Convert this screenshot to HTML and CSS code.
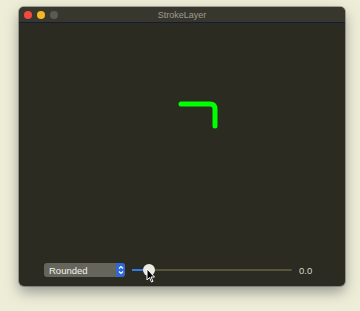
FILE: index.html
```html
<!DOCTYPE html>
<html>
<head>
<meta charset="utf-8">
<link rel="stylesheet" href="styles.css">
</head>
<body>
<div class="window">
  <div class="titlebar">
    <div class="lights">
      <span class="light red"></span>
      <span class="light yellow"></span>
      <span class="light gray"></span>
    </div>
    <div class="title">StrokeLayer</div>
  </div>
  <div class="content">
    <div class="canvas">
      <svg class="stroke" width="326" height="240" viewBox="0 0 326 240">
        <path d="M162 81 H191 Q196 81 196 86 V103" fill="none" stroke="#00ff00" stroke-width="5" stroke-linecap="round"/>
      </svg>
    </div>
    <div class="controls">
      <div class="popup">
        <span class="popup-label">Rounded</span>
        <span class="stepper">
          <svg width="8" height="12" viewBox="0 0 8 12"><path d="M2 4.5 L4 2.5 L6 4.5 M2 7.5 L4 9.5 L6 7.5" fill="none" stroke="#fff" stroke-width="1.2"/></svg>
        </span>
      </div>
      <div class="slider">
        <div class="track"><div class="fill" style="width:17px"></div></div>
        <div class="knob"></div>
        <svg class="cursor" width="10" height="15" viewBox="0 0 10 15"><path d="M1 1 V12 L3.5 9.5 L5.5 14 L7 13.3 L5 9 H8.5 Z" fill="#000" stroke="#fff" stroke-width="1"/></svg>
      </div>
      <div class="value">0.0</div>
    </div>
  </div>
</div>
</body>
</html>
```
FILE: styles.css
```css
html, body {
  margin: 0;
  padding: 0;
}
body {
  width: 360px;
  height: 311px;
  background: #eeeed8;
  font-family: "Liberation Sans", Arial, sans-serif;
  overflow: hidden;
}
.window {
  margin: 7px 0 0 19px;
  width: 326px;
  height: 279px;
  border-radius: 5px;
  overflow: hidden;
  background: #2c2b21;
  box-shadow: 0 6px 14px rgba(80, 80, 90, 0.55), 0 0 0 1px rgba(60, 60, 60, 0.4);
  display: flex;
  flex-direction: column;
}
.titlebar {
  height: 15px;
  background: #38372e;
  border-bottom: 1px solid #141a3a;
  display: flex;
  align-items: center;
  position: relative;
}
.lights {
  display: flex;
  gap: 5px;
  padding-left: 5px;
}
.light {
  width: 8px;
  height: 8px;
  border-radius: 50%;
}
.red { background: #f44a3e; }
.yellow { background: #f6b623; }
.gray { background: #5a5a55; }
.title {
  position: absolute;
  left: 0;
  right: 0;
  text-align: center;
  font-size: 9px;
  color: #9c9b94;
}
.content {
  flex: 1;
  display: flex;
  flex-direction: column;
}
.canvas {
  flex: 1;
  position: relative;
}
.stroke {
  position: absolute;
  left: 0;
  top: 0;
}
.controls {
  height: 14px;
  margin: 0 0 9px 25px;
  display: flex;
  align-items: center;
}
.popup {
  width: 81px;
  height: 14px;
  background: #66655c;
  border-radius: 3px;
  display: flex;
  align-items: center;
  overflow: hidden;
}
.popup-label {
  flex: 1;
  font-size: 9.5px;
  color: #f2f2ea;
  padding-left: 5px;
}
.stepper {
  width: 9px;
  height: 14px;
  background: #2d68d6;
  display: flex;
  align-items: center;
  justify-content: center;
  border-radius: 0 3px 3px 0;
}
.slider {
  position: relative;
  width: 160px;
  height: 14px;
  margin-left: 7px;
  display: flex;
  align-items: center;
}
.track {
  width: 100%;
  height: 2px;
  background: #57553c;
  border-radius: 1px;
}
.fill {
  height: 2px;
  background: #2f7be8;
}
.knob {
  position: absolute;
  left: 11px;
  top: 1px;
  width: 12px;
  height: 12px;
  border-radius: 50%;
  background: #ebebe2;
}
.cursor {
  position: absolute;
  left: 14px;
  top: 5px;
}
.value {
  margin-left: 7px;
  font-size: 9.5px;
  color: #d8d8d0;
}
```
